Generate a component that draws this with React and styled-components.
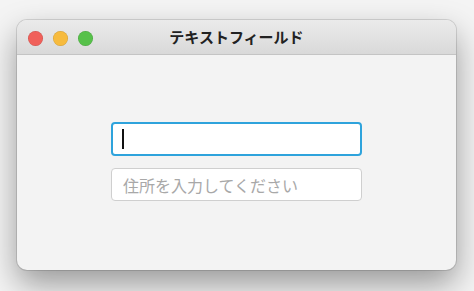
import React from "react";
import styled, { createGlobalStyle } from "styled-components";

const Global = createGlobalStyle`
  html, body { margin: 0; padding: 0; }
  body {
    background: #f4f4f4;
    font-family: "Noto Sans CJK JP", "Noto Sans", sans-serif;
    width: 474px;
    height: 291px;
    overflow: hidden;
  }
`;

const Page = styled.div`
  padding: 20px 18px 21px 17px;
  box-sizing: border-box;
  width: 474px;
  height: 291px;
`;

const Window = styled.div`
  width: 439px;
  height: 250px;
  border-radius: 10px;
  background: #f3f3f3;
  box-shadow: 0 14px 32px rgba(0, 0, 0, 0.38), 0 0 0 1px rgba(0, 0, 0, 0.12);
  display: flex;
  flex-direction: column;
  overflow: hidden;
`;

const TitleBar = styled.div`
  height: 35px;
  flex: none;
  box-sizing: border-box;
  border-bottom: 1px solid #c4c4c4;
  background: linear-gradient(#ebebeb, #d9d9d9);
  display: flex;
  align-items: center;
  position: relative;
`;

const Lights = styled.div`
  display: flex;
  gap: 10px;
  position: absolute;
  left: 11px;
  top: 11px;
`;

const Light = styled.span`
  width: 15px;
  height: 15px;
  border-radius: 50%;
  background: ${(p) => p.$c};
  box-shadow: inset 0 0 0 0.5px rgba(0, 0, 0, 0.15);
`;

const Title = styled.div`
  flex: 1;
  text-align: center;
  font-weight: 700;
  font-size: 15px;
  color: #222;
  padding-bottom: 1px;
`;

const Content = styled.div`
  flex: 1;
  display: flex;
  flex-direction: column;
  align-items: center;
  padding-top: 67px;
  gap: 12px;
`;

const Field = styled.div`
  width: 251px;
  height: ${(p) => (p.$focus ? "34px" : "33px")};
  box-sizing: border-box;
  border-radius: 4px;
  background: #fff;
  border: ${(p) => (p.$focus ? "2px solid #2ea3dc" : "1px solid #cfcfcf")};
  display: flex;
  align-items: center;
  padding-left: ${(p) => (p.$focus ? "9px" : "11px")};
  font-size: 16px;
  color: #a8a8a8;
`;

const Caret = styled.span`
  width: 1.5px;
  height: 20px;
  background: #111;
`;

export default function App() {
  return (
    <>
      <Global />
      <Page>
        <Window>
          <TitleBar>
            <Lights>
              <Light $c="#f0605a" />
              <Light $c="#f7bb3e" />
              <Light $c="#57c14a" />
            </Lights>
            <Title>テキストフィールド</Title>
          </TitleBar>
          <Content>
            <Field $focus>
              <Caret />
            </Field>
            <Field>住所を入力してください</Field>
          </Content>
        </Window>
      </Page>
    </>
  );
}
